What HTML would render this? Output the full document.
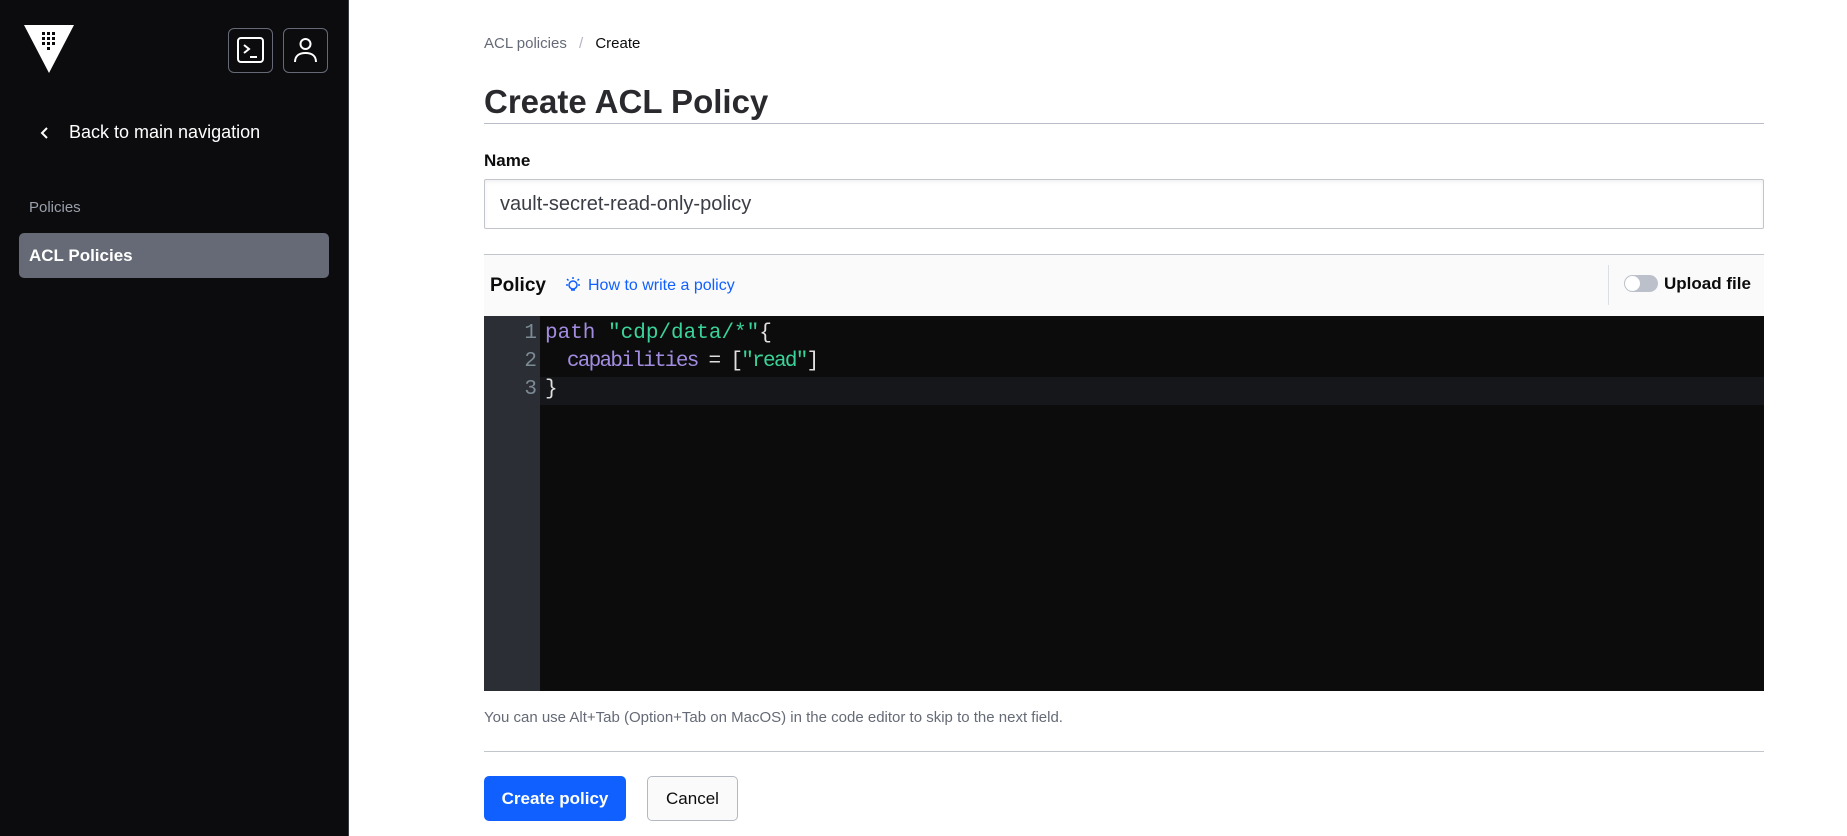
<!DOCTYPE html>
<html><head><meta charset="utf-8"><style>
*{box-sizing:border-box;margin:0;padding:0}
body{width:1847px;height:836px;overflow:hidden;background:#fff;font-family:"Liberation Sans",sans-serif;position:relative}
.side{position:absolute;left:0;top:0;width:349px;height:836px;background:#0c0c0e;border-right:1px solid #3b3d45}
.ab{position:absolute}
.ibtn{position:absolute;top:28px;width:45px;height:45px;border:1px solid #656a76;border-radius:6px}
.code{font-family:"Liberation Mono",monospace;font-size:21px;line-height:28px}
</style></head><body>
<div class="side">
  <svg class="ab" style="left:24px;top:25px" width="50" height="48" viewBox="0 0 50 48"><polygon points="0,0 50,0 25,48" fill="#fff"/>
  <g fill="#0c0c0e"><rect x="18" y="7" width="3" height="3"/><rect x="23" y="7" width="3" height="3"/><rect x="28" y="7" width="3" height="3"/><rect x="18" y="12" width="3" height="3"/><rect x="23" y="12" width="3" height="3"/><rect x="28" y="12" width="3" height="3"/><rect x="18" y="17" width="3" height="3"/><rect x="23" y="17" width="3" height="3"/><rect x="28" y="17" width="3" height="3"/><rect x="23" y="22" width="3" height="3"/></g></svg>
  <div class="ibtn" style="left:228px"><svg width="43" height="43" viewBox="0 0 43 43" fill="none" stroke="#fff" stroke-width="2"><rect x="9" y="9" width="25" height="24" rx="3"/><path d="M15 16l5 4-5 4M21 28h7"/></svg></div>
  <div class="ibtn" style="left:283px"><svg width="43" height="43" viewBox="0 0 43 43" fill="none" stroke="#fff" stroke-width="2"><circle cx="21.5" cy="15" r="5"/><path d="M11 33c0-6 4-9 10.5-9S32 27 32 33"/></svg></div>
  <svg class="ab" style="left:39px;top:126px" width="12" height="14" viewBox="0 0 12 14" fill="none" stroke="#fff" stroke-width="2"><path d="M8 2L3 7l5 5"/></svg>
  <div class="ab" style="left:69px;top:122px;color:#fff;font-size:18px">Back to main navigation</div>
  <div class="ab" style="left:29px;top:199px;color:#9aa0ab;font-size:15px">Policies</div>
  <div class="ab" style="left:19px;top:233px;width:310px;height:45px;background:#656a76;border-radius:5px;color:#fff;font-weight:bold;font-size:17px;padding:13px 10px">ACL Policies</div>
</div>

<div class="ab" style="left:484px;top:35px;font-size:15px;color:#656a76">ACL policies <span style="color:#b0b5c0;margin:0 8px">/</span> <span style="color:#0c0c0e">Create</span></div>
<div class="ab" style="left:484px;top:83px;font-size:33px;font-weight:bold;color:#2a2a2e">Create ACL Policy</div>
<div class="ab" style="left:484px;top:123px;width:1280px;height:1px;background:#b9bdca"></div>
<div class="ab" style="left:484px;top:151px;font-size:17px;font-weight:bold;color:#0c0c0e">Name</div>
<div class="ab" style="left:484px;top:179px;width:1280px;height:50px;border:1px solid #c2c5cb;border-radius:2px;box-shadow:inset 0 2px 3px rgba(0,0,0,.06);font-size:20px;color:#3b3d45;padding:13px 15px">vault-secret-read-only-policy</div>

<div class="ab" style="left:484px;top:254px;width:1280px;height:62px;background:#fafafa;border-top:1px solid #c2c5cb"></div>
<div class="ab" style="left:490px;top:275px;font-size:19px;font-weight:bold;color:#0c0c0e">Policy</div>
<svg class="ab" style="left:565px;top:276px" width="16" height="18" viewBox="0 0 16 18" fill="none" stroke="#1060ff" stroke-width="1.5"><circle cx="8" cy="9" r="4"/><path d="M6 14h4M8 1v2M2 3l1.5 1.5M14 3l-1.5 1.5M1 9h2M13 9h2"/></svg>
<div class="ab" style="left:588px;top:277px;font-size:16px;color:#1060ff">How to write a policy</div>
<div class="ab" style="left:1608px;top:265px;width:1px;height:40px;background:#dcdfe4"></div>
<div class="ab" style="left:1624px;top:275px;width:34px;height:17px;border-radius:9px;background:#bbc0cb"></div>
<div class="ab" style="left:1625px;top:276px;width:15px;height:15px;border-radius:50%;background:#fff"></div>
<div class="ab" style="left:1664px;top:274px;font-size:17px;font-weight:bold;color:#0c0c0e">Upload file</div>

<div class="ab" style="left:484px;top:316px;width:1280px;height:375px;background:#0c0c0c"></div>
<div class="ab" style="left:484px;top:316px;width:56px;height:375px;background:#2b2e35"></div>
<div class="ab" style="left:540px;top:377px;width:1224px;height:28px;background:#16171a"></div>
<div class="ab code" style="left:484px;top:320px;width:53px;text-align:right;color:#7c8a94">1<br>2<br>3</div>
<div class="ab code" style="left:545px;top:320px;color:#e0e0e0;white-space:pre"><span style="color:#a28ce0">path</span> <span style="color:#3ad399">"cdp/data/*"</span>{
<span style="letter-spacing:-1.7px">  <span style="color:#a28ce0">capabilities</span> = [<span style="color:#3ad399">"read"</span>]</span>
}</div>

<div class="ab" style="left:484px;top:709px;font-size:15px;color:#656a76">You can use Alt+Tab (Option+Tab on MacOS) in the code editor to skip to the next field.</div>
<div class="ab" style="left:484px;top:751px;width:1280px;height:1px;background:#c2c5cb"></div>
<div class="ab" style="left:484px;top:776px;width:142px;height:45px;background:#1060ff;border-radius:5px;color:#fff;font-size:17px;font-weight:bold;text-align:center;line-height:45px">Create policy</div>
<div class="ab" style="left:647px;top:776px;width:91px;height:45px;background:#fafafa;border:1px solid #b4b8c0;border-radius:5px;color:#0c0c0e;font-size:17px;text-align:center;line-height:43px">Cancel</div>
</body></html>
